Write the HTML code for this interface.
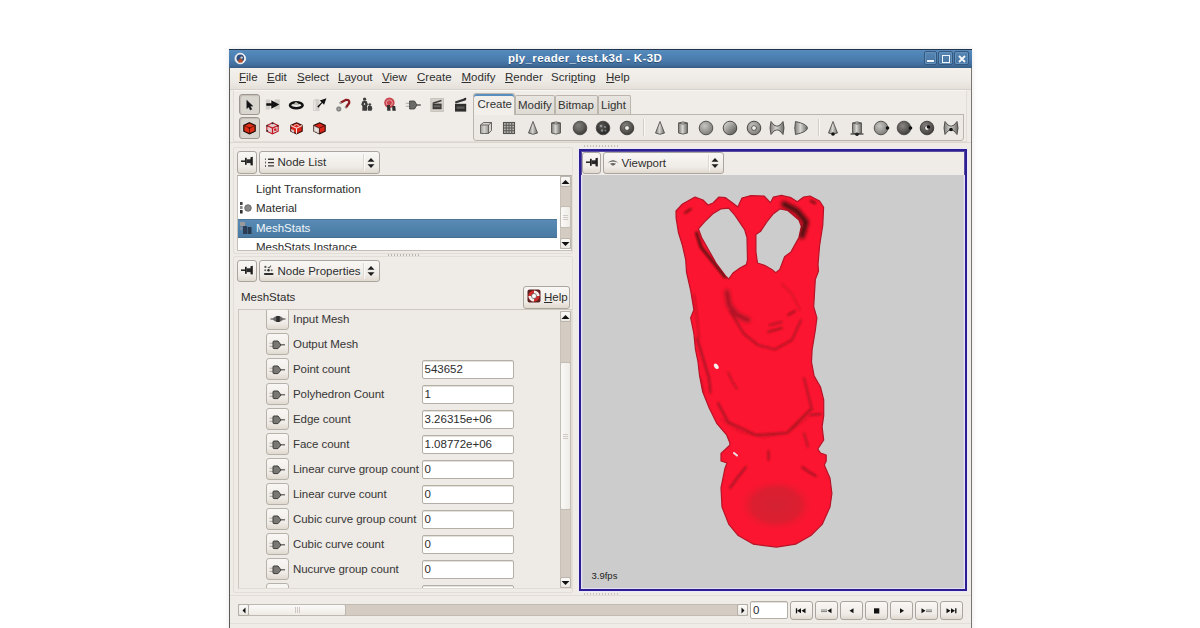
<!DOCTYPE html>
<html><head><meta charset="utf-8">
<style>
html,body{margin:0;padding:0;}
body{width:1200px;height:628px;overflow:hidden;background:#fff;position:relative;font-family:"Liberation Sans",sans-serif;font-size:11px;color:#2a2a2a;}
.a{position:absolute;}
.t{position:absolute;white-space:nowrap;line-height:13px;}
.btn{position:absolute;box-sizing:border-box;border:1px solid #aaa59e;border-radius:3px;background:linear-gradient(#f9f7f5,#efebe6 70%,#e0d9cf);}
.ent{position:absolute;box-sizing:border-box;border:1px solid #b3aea6;border-radius:2px;background:#fff;box-shadow:inset 0 1px 0 #e4e0da;}
svg{position:absolute;overflow:visible;}
</style></head>
<body>

<div class="a" style="left:229px;top:49px;width:743px;height:600px;background:#efebe7;border-left:1px solid #5e5b57;border-right:1px solid #7a7671;box-sizing:border-box;box-shadow:0 0 6px rgba(0,0,0,0.10)"></div>
<div class="a" style="left:229px;top:49px;width:743px;height:19px;background:linear-gradient(#5a8cbc 0,#5186b8 15%,#4a7cad 55%,#426f9e 80%,#365c84 100%);border-top:1px solid #1f3550;box-sizing:border-box"></div>
<div class="t" style="left:385px;top:52px;width:400px;text-align:center;color:#fff;font-weight:bold;font-size:11.5px;letter-spacing:0.35px;text-shadow:0 1px 0 #2d4f72">ply_reader_test.k3d - K-3D</div>
<svg style="left:234px;top:52px" width="13" height="13"><circle cx="6.3" cy="6.5" r="5.3" fill="#f2eeea" stroke="#fff" stroke-width="0.8"/><circle cx="6.3" cy="6.2" r="3.8" fill="#2e4f80"/><path d="M4.2,8.5 Q6.3,4.5 8.6,8.2 L8.4,10.6 L4.6,10.8Z" fill="#b24e2c"/><circle cx="7.6" cy="5.6" r="1.2" fill="#d9d0c8"/></svg>
<div class="a" style="left:923.5px;top:51px;width:13px;height:13.5px;box-sizing:border-box;border-radius:2px;background:linear-gradient(#5787b5,#4673a0);border:1px solid #35597e;box-shadow:inset 0 0 0 1px #6592bd"></div>
<div class="a" style="left:937.5px;top:51px;width:15px;height:13.5px;box-sizing:border-box;border-radius:2px;background:linear-gradient(#5787b5,#4673a0);border:1px solid #35597e;box-shadow:inset 0 0 0 1px #6592bd"></div>
<div class="a" style="left:953.5px;top:51px;width:15.5px;height:13.5px;box-sizing:border-box;border-radius:2px;background:linear-gradient(#5787b5,#4673a0);border:1px solid #35597e;box-shadow:inset 0 0 0 1px #6592bd"></div>
<div class="a" style="left:927px;top:60px;width:6.5px;height:2px;background:#f2f6fa"></div>
<div class="a" style="left:942px;top:55px;width:7.5px;height:7.5px;border:1.5px solid #eef4fa;box-sizing:border-box"></div>
<svg style="left:957.5px;top:55px" width="8" height="8"><path d="M1,1L7,7M7,1L1,7" stroke="#f2f6fa" stroke-width="1.9"/></svg>
<div class="a" style="left:230px;top:68px;width:741px;height:21px;background:linear-gradient(#f4f1ed,#eeeae5 60%,#e5e0d9)"></div>
<div class="a" style="left:233px;top:90px;width:734px;height:52px;box-sizing:border-box;border:1px solid #e2ddd6;border-top-color:#f8f6f3;background:#f0ede9"></div>
<div class="t" style="left:239px;top:71px;font-size:11.5px;color:#2e2e2e"><u style="text-decoration-thickness:1px;text-underline-offset:1px">F</u>ile</div>
<div class="t" style="left:267px;top:71px;font-size:11.5px;color:#2e2e2e"><u style="text-decoration-thickness:1px;text-underline-offset:1px">E</u>dit</div>
<div class="t" style="left:297px;top:71px;font-size:11.5px;color:#2e2e2e"><u style="text-decoration-thickness:1px;text-underline-offset:1px">S</u>elect</div>
<div class="t" style="left:338px;top:71px;font-size:11.5px;color:#2e2e2e"><u style="text-decoration-thickness:1px;text-underline-offset:1px">L</u>ayout</div>
<div class="t" style="left:382px;top:71px;font-size:11.5px;color:#2e2e2e"><u style="text-decoration-thickness:1px;text-underline-offset:1px">V</u>iew</div>
<div class="t" style="left:417px;top:71px;font-size:11.5px;color:#2e2e2e"><u style="text-decoration-thickness:1px;text-underline-offset:1px">C</u>reate</div>
<div class="t" style="left:461.5px;top:71px;font-size:11.5px;color:#2e2e2e"><u style="text-decoration-thickness:1px;text-underline-offset:1px">M</u>odify</div>
<div class="t" style="left:505px;top:71px;font-size:11.5px;color:#2e2e2e"><u style="text-decoration-thickness:1px;text-underline-offset:1px">R</u>ender</div>
<div class="t" style="left:551px;top:71px;font-size:11.5px;color:#2e2e2e">Scri<u style="text-decoration-thickness:1px;text-underline-offset:1px">p</u>ting</div>
<div class="t" style="left:606px;top:71px;font-size:11.5px;color:#2e2e2e"><u style="text-decoration-thickness:1px;text-underline-offset:1px">H</u>elp</div>
<div class="a" style="left:230px;top:89px;width:741px;height:1px;background:#d6d1ca"></div>
<svg width="0" height="0" style="left:0;top:0"><defs>
<radialGradient id="gs" cx="0.4" cy="0.35" r="0.7"><stop offset="0" stop-color="#c8c6c2"/><stop offset="1" stop-color="#7a7874"/></radialGradient>
<radialGradient id="gd" cx="0.4" cy="0.35" r="0.7"><stop offset="0" stop-color="#8a8784"/><stop offset="1" stop-color="#3a3836"/></radialGradient>
<radialGradient id="gk" cx="0.4" cy="0.35" r="0.7"><stop offset="0" stop-color="#5a5856"/><stop offset="1" stop-color="#222"/></radialGradient>
<linearGradient id="gc" x1="0" x2="1"><stop offset="0" stop-color="#7c7a77"/><stop offset="0.45" stop-color="#d8d6d2"/><stop offset="1" stop-color="#6a6865"/></linearGradient>
<linearGradient id="gh" x1="0" y1="0" x2="1" y2="1"><stop offset="0" stop-color="#e8e6e2"/><stop offset="0.5" stop-color="#9b9995"/><stop offset="1" stop-color="#4a4846"/></linearGradient>
</defs></svg>
<div class="a" style="left:239px;top:94px;width:21px;height:21px;box-sizing:border-box;border:1px solid #9c978f;border-radius:3px;background:#d9d5cf;box-shadow:inset 1px 1px 1px #c2beb7"></div>
<div class="a" style="left:239px;top:117px;width:21px;height:22px;box-sizing:border-box;border:1px solid #9c978f;border-radius:3px;background:#d9d5cf;box-shadow:inset 1px 1px 1px #c2beb7"></div>
<svg style="left:230px;top:90px" width="250" height="52" viewBox="230 90 250 52"><path d="M246.8,100.3 L246.8,108.6 L248.7,107 L250.3,110 L251.8,109.3 L250.3,106.3 L252.8,106.1 Z" fill="#111" stroke="#222" stroke-width="0.5"/></svg>
<svg style="left:230px;top:90px" width="250" height="52" viewBox="230 90 250 52"><rect x="265.8" y="99.5" width="4.4" height="10" fill="#d2cfca"/><rect x="274.5" y="99.5" width="5.3" height="10" fill="#cdc9c3"/><path d="M266.3,103.2 L271.3,103.2 L271.3,100.3 L279.3,104.5 L271.3,108.7 L271.3,105.8 L266.3,105.8Z" fill="#111"/></svg>
<svg style="left:230px;top:90px" width="250" height="52" viewBox="230 90 250 52"><ellipse cx="296.3" cy="105.3" rx="6.3" ry="3" fill="#e8e6e2" stroke="#111" stroke-width="2.6"/><path d="M293,105 L296,101.8 L299.5,105Z" fill="#b8b5b0"/></svg>
<svg style="left:230px;top:90px" width="250" height="52" viewBox="230 90 250 52"><path d="M313.2,100.5 L316,98.8 L319.5,99.5 L319.5,111 L313.2,111Z" fill="#d3d0cb"/><path d="M314,101 L315.5,101 L315.5,110 L314,110Z" fill="#e9e7e3"/><path d="M317.3,106.6 L321.6,102.3 L319.8,100.5 L326.4,98.2 L324.1,104.8 L322.3,103 L318.4,107.7Z" fill="#111"/></svg>
<svg style="left:230px;top:90px" width="250" height="52" viewBox="230 90 250 52"><circle cx="338.8" cy="109" r="2.3" fill="#8a8886" stroke="#777" stroke-width="0.6"/><circle cx="338.8" cy="109" r="0.8" fill="#bbb"/><path d="M341.4,102.3 L345.5,100 Q349.8,99.4 349.2,103 L346.3,107" fill="none" stroke="#8e1a22" stroke-width="2.3" stroke-linecap="round"/><path d="M339.5,103.4 L341.4,102.3 M344.8,107.6 L346.3,107" stroke="#9a9894" stroke-width="2"/></svg>
<svg style="left:230px;top:90px" width="250" height="52" viewBox="230 90 250 52"><circle cx="364.6" cy="99.2" r="1.6" fill="#3e3e3c"/><path d="M362.6,101 L366.6,101 L368,104.5 L367,106 L367.2,110.8 L362.3,110.8 L362.4,106 L361.2,104.5Z" fill="#3e3e3c"/><circle cx="369.8" cy="104.6" r="1.4" fill="#444"/><path d="M368,106 L371.6,106 L372.3,108.5 L371.6,110.8 L368.2,110.8 L367.6,108.5Z" fill="#3e3e3c"/><path d="M364,103 L365,103 L365.2,105 L363.8,105Z" fill="#cfccc8"/></svg>
<svg style="left:230px;top:90px" width="250" height="52" viewBox="230 90 250 52"><circle cx="389.4" cy="102.8" r="5.2" fill="#c9444c"/><circle cx="389.4" cy="102.8" r="3" fill="none" stroke="#e7a3a8" stroke-width="1"/><path d="M387,105 L390,105 L390.6,110.8 L387.2,110.8Z" fill="#333"/><path d="M392.2,106 L395.2,106 L395.8,110.8 L392.4,110.8Z" fill="#2e2e2e"/></svg>
<svg style="left:230px;top:90px" width="250" height="52" viewBox="230 90 250 52"><path d="M405.8,103.3 L409.8,103.3 M405.8,106.2 L409.8,106.2" stroke="#a9a6a0" stroke-width="1.1"/><path d="M409.6,101 L414.5,101 L417,105 L414.5,109 L409.6,109Z" fill="#6c6a68" stroke="#3e3c3a" stroke-width="0.8"/><path d="M416.5,105 L420.8,105" stroke="#4a4846" stroke-width="1.3"/></svg>
<svg style="left:230px;top:90px" width="250" height="52" viewBox="230 90 250 52"><rect x="430.8" y="98.4" width="12.8" height="13" fill="#d4d0ca" stroke="#c2beb7" stroke-width="0.8"/><path d="M432.6,103.6 L441.6,103.6 L441.6,109.2 L432.6,109.2Z" fill="#3a3937"/><path d="M432.6,102.6 L441.3,99.8 L441.6,101.3 L432.9,104Z" fill="#3e3d3b"/><rect x="433.8" y="105.4" width="6.6" height="1.8" fill="#6a6866"/></svg>
<svg style="left:230px;top:90px" width="250" height="52" viewBox="230 90 250 52"><path d="M455,103.8 L466.2,103.8 L466.2,111.6 L455,111.6Z" fill="#2f2e2d"/><path d="M455,101.6 L465.4,98 L466,100.2 L455.6,103.6Z" fill="#333"/><rect x="456.6" y="106.4" width="8" height="2.4" fill="#5e5c5a"/><circle cx="465.3" cy="98.8" r="1" fill="#222"/></svg>
<svg style="left:242.5px;top:121.7px" width="13" height="12.6" viewBox="0 0 16 16.5" preserveAspectRatio="none"><path d="M8,1 L15,4.5 L15,12 L8,15.5 L1,12 L1,4.5Z" fill="#df2d16" stroke="#1e0a06" stroke-width="1.5"/><path d="M1,4.5 L8,8 L15,4.5 M8,8 L8,15.5" stroke="#5a1208" stroke-width="1" fill="none"/><circle cx="8" cy="8" r="1.2" fill="#4a0d08"/></svg>
<svg style="left:266.1px;top:121.7px" width="13" height="12.6" viewBox="0 0 16 16.5" preserveAspectRatio="none"><path d="M8,1 L15,4.5 L15,12 L8,15.5 L1,12 L1,4.5Z" fill="#e2cdd0" stroke="#b8141e" stroke-width="1.3"/><path d="M1,4.5 L8,8 L15,4.5 M8,8 L8,15.5" stroke="#c8141e" stroke-width="1.6" fill="none"/><rect x="10" y="8.5" width="3" height="3" fill="#d41a22"/><circle cx="8" cy="1.5" r="1.3" fill="#333"/><circle cx="1.5" cy="4.8" r="1.2" fill="#333"/><circle cx="1.5" cy="11.8" r="1.2" fill="#333"/><circle cx="14.5" cy="4.8" r="1.1" fill="#5a1a16"/></svg>
<svg style="left:289.5px;top:121.7px" width="13" height="12.6" viewBox="0 0 16 16.5" preserveAspectRatio="none"><path d="M8,1 L15,4.5 L15,12 L8,15.5 L1,12 L1,4.5Z" fill="#dc2418" stroke="#3a0d08" stroke-width="1.4"/><path d="M1,4.5 L8,8 L15,4.5 M8,8 L8,15.5" stroke="#f2e4e4" stroke-width="1.3" fill="none"/><path d="M5,4.6 L8,3.3 L11,4.6" stroke="#f2e2e2" stroke-width="1.1" fill="none"/><path d="M1.5,9 L5,11 L5,14 L1.5,12Z" fill="#d9d2d0"/></svg>
<svg style="left:313.2px;top:121.7px" width="13" height="12.6" viewBox="0 0 16 16.5" preserveAspectRatio="none"><path d="M8,1 L15,4.5 L15,12 L8,15.5 L1,12 L1,4.5Z" fill="#dc2418" stroke="#2a0d08" stroke-width="1.4"/><path d="M1,4.5 L8,8 L8,15.5 L1,12Z" fill="#cfc8c4"/><path d="M1,4.5 L8,8 L15,4.5 M8,8 L8,15.5" stroke="#3a0d08" stroke-width="1" fill="none"/><path d="M2.5,7 L6.5,9.5 L6.5,13 L2.5,11Z" fill="#e8e4e2"/></svg>
<div class="a" style="left:473px;top:114px;width:491px;height:27px;box-sizing:border-box;border:1px solid #bab5ad;border-radius:0 0 3px 3px;background:#ede9e4"></div>
<div class="a" style="left:472.5px;top:93px;width:42.5px;height:22px;box-sizing:border-box;border:1px solid #bab5ad;border-bottom:none;border-radius:3px 3px 0 0;background:#f2efeb;box-shadow:inset 0 2px 0 #5a8ebf"></div>
<div class="t" style="left:477.5px;top:98px;font-size:11.5px;color:#333">Create</div>
<div class="a" style="left:515px;top:95px;width:39.5px;height:19px;box-sizing:border-box;border:1px solid #bab5ad;border-bottom:none;border-radius:2px 2px 0 0;background:linear-gradient(#e9e5e0,#dedad4)"></div>
<div class="t" style="left:518px;top:99px;font-size:11.5px;color:#333">Modify</div>
<div class="a" style="left:555px;top:95px;width:42.5px;height:19px;box-sizing:border-box;border:1px solid #bab5ad;border-bottom:none;border-radius:2px 2px 0 0;background:linear-gradient(#e9e5e0,#dedad4)"></div>
<div class="t" style="left:558px;top:99px;font-size:11.5px;color:#333">Bitmap</div>
<div class="a" style="left:598px;top:95px;width:33px;height:19px;box-sizing:border-box;border:1px solid #bab5ad;border-bottom:none;border-radius:2px 2px 0 0;background:linear-gradient(#e9e5e0,#dedad4)"></div>
<div class="t" style="left:601px;top:99px;font-size:11.5px;color:#333">Light</div>
<div class="a" style="left:515px;top:114px;width:449px;height:1px;background:#bab5ad"></div>
<div class="a" style="left:643px;top:119px;width:1px;height:17px;background:#d2cdc6;box-shadow:1px 0 0 #faf8f6"></div>
<div class="a" style="left:817.5px;top:119px;width:1px;height:17px;background:#d2cdc6;box-shadow:1px 0 0 #faf8f6"></div>
<svg style="left:477.5px;top:119.5px" width="16" height="16" viewBox="0 0 16 16"><path d="M2.5,5 L5.5,2.5 L13.5,2.5 L13.5,10.5 L10.5,13.5 L2.5,13.5Z" fill="#d8d5d0" stroke="#5a5855" stroke-width="0.9"/><rect x="3" y="5.5" width="7.2" height="7.6" fill="url(#gc)" opacity="0.55"/><path d="M2.5,5 L10.5,5 L13.5,2.5 M10.5,5 L10.5,13.5" fill="none" stroke="#5a5855" stroke-width="0.9"/></svg>
<svg style="left:501.0px;top:119.5px" width="16" height="16" viewBox="0 0 16 16"><rect x="2.5" y="2.5" width="11" height="11" fill="#b8b5b0" stroke="#55534f" stroke-width="1.1"/><path d="M5.25,2.5V13.5M8,2.5V13.5M10.75,2.5V13.5M2.5,5.25H13.5M2.5,8H13.5M2.5,10.75H13.5" stroke="#5a5854" stroke-width="1"/></svg>
<svg style="left:524.5px;top:119.5px" width="16" height="16" viewBox="0 0 16 16"><path d="M8,1.5 L12.5,13 Q8,15.5 3.5,13Z" fill="url(#gc)" stroke="#555350" stroke-width="0.9"/></svg>
<svg style="left:548.0px;top:119.5px" width="16" height="16" viewBox="0 0 16 16"><path d="M3.5,3 Q8,0.8 12.5,3 L12.5,13 Q8,15.2 3.5,13Z" fill="url(#gc)" stroke="#555350" stroke-width="0.9"/><path d="M3.5,3 Q8,5.2 12.5,3" fill="none" stroke="#555350" stroke-width="0.8"/></svg>
<svg style="left:572.0px;top:119.5px" width="16" height="16" viewBox="0 0 16 16"><circle cx="8" cy="8" r="6.8" fill="url(#gd)" stroke="#4a4846" stroke-width="0.9"/><circle cx="8" cy="8" r="3" fill="#6a6865" opacity="0.4"/></svg>
<svg style="left:595.0px;top:119.5px" width="16" height="16" viewBox="0 0 16 16"><circle cx="8" cy="8" r="6.8" fill="url(#gk)" stroke="#4a4846" stroke-width="0.9"/><circle cx="6" cy="6" r="1.3" fill="#999"/><circle cx="10" cy="7" r="1.1" fill="#888"/><circle cx="7" cy="10.5" r="1.2" fill="#888"/><circle cx="10.5" cy="10.5" r="0.9" fill="#777"/></svg>
<svg style="left:618.5px;top:119.5px" width="16" height="16" viewBox="0 0 16 16"><circle cx="8" cy="8" r="6.8" fill="url(#gd)" stroke="#3e3c3a" stroke-width="0.9"/><circle cx="8" cy="8" r="2.4" fill="#f4f2ef" stroke="#3e3c3a" stroke-width="0.8"/></svg>
<svg style="left:651.5px;top:119.5px" width="16" height="16" viewBox="0 0 16 16"><path d="M8,1.5 L12.5,13 Q8,15.5 3.5,13Z" fill="url(#gc)" stroke="#555350" stroke-width="0.9"/></svg>
<svg style="left:674.5px;top:119.5px" width="16" height="16" viewBox="0 0 16 16"><path d="M3.5,3 Q8,0.8 12.5,3 L12.5,13 Q8,15.2 3.5,13Z" fill="url(#gc)" stroke="#555350" stroke-width="0.9"/><path d="M3.5,3 Q8,5.2 12.5,3" fill="none" stroke="#555350" stroke-width="0.8"/></svg>
<svg style="left:698.0px;top:119.5px" width="16" height="16" viewBox="0 0 16 16"><circle cx="8" cy="8" r="6.8" fill="url(#gs)" stroke="#4a4846" stroke-width="0.9"/></svg>
<svg style="left:722.0px;top:119.5px" width="16" height="16" viewBox="0 0 16 16"><circle cx="8" cy="8" r="6.8" fill="url(#gh)" stroke="#3e3c3a" stroke-width="0.9"/></svg>
<svg style="left:745.5px;top:119.5px" width="16" height="16" viewBox="0 0 16 16"><circle cx="8" cy="8" r="6.8" fill="url(#gs)" stroke="#3e3c3a" stroke-width="0.9"/><circle cx="8" cy="8" r="2.4" fill="#f4f2ef" stroke="#3e3c3a" stroke-width="0.8"/></svg>
<svg style="left:769.0px;top:119.5px" width="16" height="16" viewBox="0 0 16 16"><path d="M2,1.5 Q8,11 14,1.5 Q16,8 14,14.5 Q8,5 2,14.5 Q0,8 2,1.5Z" fill="url(#gc)" stroke="#4a4846" stroke-width="0.9"/></svg>
<svg style="left:792.5px;top:119.5px" width="16" height="16" viewBox="0 0 16 16"><path d="M2.5,1.5 Q14,4 14.5,8 Q14,12 2.5,14.5 Q1,8 2.5,1.5Z" fill="url(#gc)" stroke="#4a4846" stroke-width="0.9"/></svg>
<svg style="left:825.0px;top:119.5px" width="16" height="16" viewBox="0 0 16 16"><path d="M8,1.5 L12.5,13 Q8,15.5 3.5,13Z" fill="url(#gc)" stroke="#555350" stroke-width="0.9"/><circle cx="8" cy="14" r="1.8" fill="#111"/></svg>
<svg style="left:849.0px;top:119.5px" width="16" height="16" viewBox="0 0 16 16"><path d="M3.5,3 Q8,0.8 12.5,3 L12.5,13 Q8,15.2 3.5,13Z" fill="url(#gc)" stroke="#555350" stroke-width="0.9"/><path d="M3.5,3 Q8,5.2 12.5,3" fill="none" stroke="#555350" stroke-width="0.8"/><circle cx="8" cy="14.2" r="1.8" fill="#111"/><path d="M1.5,14 L14.5,14" stroke="#333" stroke-width="1.2"/></svg>
<svg style="left:872.5px;top:119.5px" width="16" height="16" viewBox="0 0 16 16"><circle cx="8" cy="8" r="6.8" fill="url(#gs)" stroke="#4a4846" stroke-width="0.9"/><circle cx="14.5" cy="8" r="1.8" fill="#111"/></svg>
<svg style="left:895.5px;top:119.5px" width="16" height="16" viewBox="0 0 16 16"><circle cx="8" cy="8" r="6.8" fill="url(#gd)" stroke="#4a4846" stroke-width="0.9"/><circle cx="14.5" cy="8" r="1.8" fill="#111"/></svg>
<svg style="left:919.0px;top:119.5px" width="16" height="16" viewBox="0 0 16 16"><circle cx="8" cy="8" r="6.8" fill="url(#gd)" stroke="#3e3c3a" stroke-width="0.9"/><circle cx="8" cy="8" r="2.4" fill="#f4f2ef" stroke="#3e3c3a" stroke-width="0.8"/><circle cx="9.5" cy="7" r="1.8" fill="#111"/></svg>
<svg style="left:943.0px;top:119.5px" width="16" height="16" viewBox="0 0 16 16"><path d="M2,1.5 Q8,11 14,1.5 Q16,8 14,14.5 Q8,5 2,14.5 Q0,8 2,1.5Z" fill="url(#gc)" stroke="#4a4846" stroke-width="0.9"/><circle cx="8" cy="9.5" r="1.8" fill="#111"/></svg>
<div class="a" style="left:230px;top:142px;width:741px;height:1px;background:#dcd7d0"></div>
<div class="a" style="left:233px;top:147px;width:340px;height:107px;box-sizing:border-box;border:1px solid #e2ddd6;border-radius:2px"></div>
<div class="a" style="left:233px;top:256px;width:340px;height:337px;box-sizing:border-box;border:1px solid #e2ddd6;border-radius:2px"></div>
<div class="a" style="left:388px;top:254px;width:33px;height:2px;background:repeating-linear-gradient(90deg,#b9b4ad 0 1px,transparent 1px 3px)"></div>
<div class="btn" style="left:237px;top:151px;width:20px;height:23px"></div>
<svg style="left:240.0px;top:155.0px" width="14" height="12"><path d="M1,6.2 H5.5" stroke="#1e1e1e" stroke-width="1.5"/><rect x="5" y="2.8" width="1.7" height="7" fill="#1e1e1e"/><rect x="6.5" y="4.3" width="4.5" height="3.8" fill="#2a2a2a"/><path d="M10.5,2.2 L12.8,1.8 L12.8,10.6 L10.5,10.2Z" fill="#1e1e1e"/></svg>
<div class="btn" style="left:259px;top:151px;width:121px;height:23px"></div>
<svg style="left:265px;top:158px" width="12" height="11"><path d="M0.5,0.5v1.5M0.5,3.5v2M0.5,7v2" stroke="#666" stroke-width="1"/><path d="M3,1.3H9M3,4.6H9M3,7.9H9" stroke="#3a3a3a" stroke-width="1.4"/></svg>
<div class="t" style="left:277.5px;top:155.5px;font-size:11.5px;color:#2e2e2e">Node List</div>
<div class="a" style="left:363px;top:154px;width:1px;height:17px;background:#dcd8d2;box-shadow:1px 0 0 #fbfaf8"></div>
<svg style="left:367px;top:156.5px" width="8" height="12"><path d="M4,1 L7.5,4.8 L0.5,4.8Z M4,11 L7.5,7.2 L0.5,7.2Z" fill="#1e1e1e"/></svg>
<div class="a" style="left:237px;top:175px;width:335px;height:76px;box-sizing:border-box;border:1px solid #c3beb6;border-top-color:#b0aba3;background:#fff;overflow:hidden"></div>
<div class="a" style="left:238px;top:218.5px;width:319px;height:19px;box-sizing:border-box;border-top:1px solid #4b7794;border-bottom:1px solid #466f8e;background:linear-gradient(#5b8ab6,#4e82aa 55%,#4a7aa3)"></div>
<div class="t" style="left:256px;top:183px;font-size:11.5px;color:#2c2c2c">Light Transformation</div>
<div class="t" style="left:256px;top:202px;font-size:11.5px;color:#2c2c2c">Material</div>
<div class="t" style="left:256px;top:221.5px;font-size:11.5px;color:#f2f6fa">MeshStats</div>
<div class="a" style="left:238px;top:236px;width:319px;height:14px;overflow:hidden"><div class="t" style="left:18px;top:5px;font-size:11.5px;color:#2c2c2c">MeshStats Instance</div></div>
<svg style="left:239px;top:201px" width="14" height="14"><rect x="1" y="1" width="2.6" height="3" fill="#444"/><rect x="1" y="5" width="2.6" height="3" fill="#888"/><rect x="1" y="9" width="2.6" height="3.5" fill="#333"/><circle cx="9" cy="7" r="3.3" fill="#8a8886" stroke="#555" stroke-width="0.7"/></svg>
<svg style="left:239px;top:221px" width="14" height="14"><rect x="1" y="1" width="5" height="4" fill="#9a9a9a"/><rect x="4" y="5" width="4" height="8" fill="#2c3e55"/><rect x="8.5" y="6" width="4" height="7" fill="#2a3a50"/><rect x="1" y="6" width="2.5" height="3" fill="#7a8ba0"/></svg>
<div class="a" style="left:559.5px;top:176px;width:11px;height:73px;box-sizing:border-box;background:#d4ccc3;border:1px solid #c8c1b8"></div>
<div class="a" style="left:559.5px;top:205.5px;width:11px;height:22.5px;box-sizing:border-box;background:linear-gradient(90deg,#faf9f7,#efece8);border:1px solid #c2bdb5;border-radius:2px"></div>
<div class="a" style="left:562.5px;top:214.75px;width:5px;height:5px;background:repeating-linear-gradient(#cfcac3 0 1px,transparent 1px 2px)"></div>
<div class="a" style="left:559.5px;top:176px;width:11px;height:11px;box-sizing:border-box;background:linear-gradient(#fbfaf8,#ebe8e3);border:1px solid #b9b4ac;border-radius:2px"></div>
<svg style="left:559.5px;top:179px" width="11" height="6"><path d="M1.5,5 L5.5,1 L9.5,5Z" fill="#111"/></svg>
<div class="a" style="left:559.5px;top:238px;width:11px;height:11px;box-sizing:border-box;background:linear-gradient(#fbfaf8,#ebe8e3);border:1px solid #b9b4ac;border-radius:2px"></div>
<svg style="left:559.5px;top:241px" width="11" height="6"><path d="M1.5,1 L5.5,5 L9.5,1Z" fill="#111"/></svg>
<div class="btn" style="left:237px;top:260px;width:20px;height:22px"></div>
<svg style="left:240.0px;top:263.5px" width="14" height="12"><path d="M1,6.2 H5.5" stroke="#1e1e1e" stroke-width="1.5"/><rect x="5" y="2.8" width="1.7" height="7" fill="#1e1e1e"/><rect x="6.5" y="4.3" width="4.5" height="3.8" fill="#2a2a2a"/><path d="M10.5,2.2 L12.8,1.8 L12.8,10.6 L10.5,10.2Z" fill="#1e1e1e"/></svg>
<div class="btn" style="left:259px;top:260px;width:121px;height:22px"></div>
<svg style="left:263px;top:264px" width="12" height="12"><circle cx="2.4" cy="2.9" r="1.1" fill="#555"/><path d="M4.8,3.2 L6.2,3.9 L8,1.6" stroke="#666" stroke-width="1.1" fill="none"/><circle cx="2.2" cy="6.3" r="1" fill="#666"/><circle cx="5.5" cy="6.3" r="1.2" fill="#222"/><circle cx="8.7" cy="6.3" r="1" fill="#777"/><path d="M2,10 H9.5" stroke="#2e2e2e" stroke-width="2.2" stroke-linecap="round"/></svg>
<div class="t" style="left:277.5px;top:264.5px;font-size:11.5px;color:#2e2e2e">Node Properties</div>
<div class="a" style="left:363px;top:263px;width:1px;height:16px;background:#dcd8d2;box-shadow:1px 0 0 #fbfaf8"></div>
<svg style="left:367px;top:265.0px" width="8" height="12"><path d="M4,1 L7.5,4.8 L0.5,4.8Z M4,11 L7.5,7.2 L0.5,7.2Z" fill="#1e1e1e"/></svg>
<div class="t" style="left:241px;top:290.5px;font-size:11.5px;color:#2c2c2c">MeshStats</div>
<div class="btn" style="left:523px;top:286px;width:47px;height:23px"></div>
<svg style="left:527px;top:289px" width="14" height="14"><rect x="0.5" y="0.5" width="13" height="13" rx="2" fill="#5a2020"/><circle cx="7" cy="7" r="5.6" fill="#d02a2a"/><path d="M7,1.4 A5.6,5.6 0 0 1 12.6,7 L9.5,7 A2.5,2.5 0 0 0 7,4.5Z M7,12.6 A5.6,5.6 0 0 1 1.4,7 L4.5,7 A2.5,2.5 0 0 0 7,9.5Z" fill="#f2eeee"/><circle cx="7" cy="7" r="2.5" fill="#fff" stroke="#444" stroke-width="0.6"/></svg>
<div class="t" style="left:544px;top:290.5px;font-size:11.5px;color:#2c2c2c"><u style="text-decoration-thickness:1px;text-underline-offset:1px">H</u>elp</div>
<div class="a" style="left:238px;top:309px;width:334px;height:280px;box-sizing:border-box;border:1px solid #cdc7be;border-right-color:#e0dbd4;border-bottom-color:#e0dbd4;background:#eeeae5;overflow:hidden" id="sw">
<div class="btn" style="left:27px;top:-2.5px;width:23px;height:22px;border-color:#b6b1a9"></div>
<svg style="left:31px;top:4.2px" width="16" height="10"><path d="M0.5,5 H15.5" stroke="#555" stroke-width="1.2"/><path d="M2.5,5 Q4.5,2 8,2 Q11.5,2 13.5,5 Q11.5,8 8,8 Q4.5,8 2.5,5Z" fill="#6a6866"/><rect x="6.3" y="2" width="3.4" height="6" fill="#2e2e2e"/></svg>
<div class="t" style="left:54px;top:2.5px;font-size:11.5px;color:#363636;letter-spacing:-0.06px">Input Mesh</div>
<div class="btn" style="left:27px;top:22.5px;width:23px;height:22px;border-color:#b6b1a9"></div>
<svg style="left:31px;top:27.5px" width="16" height="12"><path d="M-0.5,5.3H3M-0.5,8.4H3" stroke="#b5b1aa" stroke-width="1.1"/><path d="M4,3 Q3,3 3,4 L3,9.5 Q3,10.6 4,10.6 L8,10.6 L11,7 L8,3Z" fill="#7a7875" stroke="#3e3c3a" stroke-width="1"/><path d="M10.5,6.8H15" stroke="#4a4846" stroke-width="1.1"/></svg>
<div class="t" style="left:54px;top:27.5px;font-size:11.5px;color:#363636;letter-spacing:-0.06px">Output Mesh</div>
<div class="btn" style="left:27px;top:47.5px;width:23px;height:22px;border-color:#b6b1a9"></div>
<svg style="left:31px;top:52.5px" width="16" height="12"><path d="M-0.5,5.3H3M-0.5,8.4H3" stroke="#b5b1aa" stroke-width="1.1"/><path d="M4,3 Q3,3 3,4 L3,9.5 Q3,10.6 4,10.6 L8,10.6 L11,7 L8,3Z" fill="#7a7875" stroke="#3e3c3a" stroke-width="1"/><path d="M10.5,6.8H15" stroke="#4a4846" stroke-width="1.1"/></svg>
<div class="t" style="left:54px;top:52.5px;font-size:11.5px;color:#363636;letter-spacing:-0.06px">Point count</div>
<div class="ent" style="left:183px;top:49.5px;width:92px;height:19px"></div>
<div class="t" style="left:185.5px;top:53.0px;font-size:11.5px;color:#2c2c2c">543652</div>
<div class="btn" style="left:27px;top:72.5px;width:23px;height:22px;border-color:#b6b1a9"></div>
<svg style="left:31px;top:77.5px" width="16" height="12"><path d="M-0.5,5.3H3M-0.5,8.4H3" stroke="#b5b1aa" stroke-width="1.1"/><path d="M4,3 Q3,3 3,4 L3,9.5 Q3,10.6 4,10.6 L8,10.6 L11,7 L8,3Z" fill="#7a7875" stroke="#3e3c3a" stroke-width="1"/><path d="M10.5,6.8H15" stroke="#4a4846" stroke-width="1.1"/></svg>
<div class="t" style="left:54px;top:77.5px;font-size:11.5px;color:#363636;letter-spacing:-0.06px">Polyhedron Count</div>
<div class="ent" style="left:183px;top:74.5px;width:92px;height:19px"></div>
<div class="t" style="left:185.5px;top:78.0px;font-size:11.5px;color:#2c2c2c">1</div>
<div class="btn" style="left:27px;top:97.5px;width:23px;height:22px;border-color:#b6b1a9"></div>
<svg style="left:31px;top:102.5px" width="16" height="12"><path d="M-0.5,5.3H3M-0.5,8.4H3" stroke="#b5b1aa" stroke-width="1.1"/><path d="M4,3 Q3,3 3,4 L3,9.5 Q3,10.6 4,10.6 L8,10.6 L11,7 L8,3Z" fill="#7a7875" stroke="#3e3c3a" stroke-width="1"/><path d="M10.5,6.8H15" stroke="#4a4846" stroke-width="1.1"/></svg>
<div class="t" style="left:54px;top:102.5px;font-size:11.5px;color:#363636;letter-spacing:-0.06px">Edge count</div>
<div class="ent" style="left:183px;top:99.5px;width:92px;height:19px"></div>
<div class="t" style="left:185.5px;top:103.0px;font-size:11.5px;color:#2c2c2c">3.26315e+06</div>
<div class="btn" style="left:27px;top:122.5px;width:23px;height:22px;border-color:#b6b1a9"></div>
<svg style="left:31px;top:127.5px" width="16" height="12"><path d="M-0.5,5.3H3M-0.5,8.4H3" stroke="#b5b1aa" stroke-width="1.1"/><path d="M4,3 Q3,3 3,4 L3,9.5 Q3,10.6 4,10.6 L8,10.6 L11,7 L8,3Z" fill="#7a7875" stroke="#3e3c3a" stroke-width="1"/><path d="M10.5,6.8H15" stroke="#4a4846" stroke-width="1.1"/></svg>
<div class="t" style="left:54px;top:127.5px;font-size:11.5px;color:#363636;letter-spacing:-0.06px">Face count</div>
<div class="ent" style="left:183px;top:124.5px;width:92px;height:19px"></div>
<div class="t" style="left:185.5px;top:128.0px;font-size:11.5px;color:#2c2c2c">1.08772e+06</div>
<div class="btn" style="left:27px;top:147.5px;width:23px;height:22px;border-color:#b6b1a9"></div>
<svg style="left:31px;top:152.5px" width="16" height="12"><path d="M-0.5,5.3H3M-0.5,8.4H3" stroke="#b5b1aa" stroke-width="1.1"/><path d="M4,3 Q3,3 3,4 L3,9.5 Q3,10.6 4,10.6 L8,10.6 L11,7 L8,3Z" fill="#7a7875" stroke="#3e3c3a" stroke-width="1"/><path d="M10.5,6.8H15" stroke="#4a4846" stroke-width="1.1"/></svg>
<div class="t" style="left:54px;top:152.5px;font-size:11.5px;color:#363636;letter-spacing:-0.06px">Linear curve group count</div>
<div class="ent" style="left:183px;top:149.5px;width:92px;height:19px"></div>
<div class="t" style="left:185.5px;top:153.0px;font-size:11.5px;color:#2c2c2c">0</div>
<div class="btn" style="left:27px;top:172.5px;width:23px;height:22px;border-color:#b6b1a9"></div>
<svg style="left:31px;top:177.5px" width="16" height="12"><path d="M-0.5,5.3H3M-0.5,8.4H3" stroke="#b5b1aa" stroke-width="1.1"/><path d="M4,3 Q3,3 3,4 L3,9.5 Q3,10.6 4,10.6 L8,10.6 L11,7 L8,3Z" fill="#7a7875" stroke="#3e3c3a" stroke-width="1"/><path d="M10.5,6.8H15" stroke="#4a4846" stroke-width="1.1"/></svg>
<div class="t" style="left:54px;top:177.5px;font-size:11.5px;color:#363636;letter-spacing:-0.06px">Linear curve count</div>
<div class="ent" style="left:183px;top:174.5px;width:92px;height:19px"></div>
<div class="t" style="left:185.5px;top:178.0px;font-size:11.5px;color:#2c2c2c">0</div>
<div class="btn" style="left:27px;top:197.5px;width:23px;height:22px;border-color:#b6b1a9"></div>
<svg style="left:31px;top:202.5px" width="16" height="12"><path d="M-0.5,5.3H3M-0.5,8.4H3" stroke="#b5b1aa" stroke-width="1.1"/><path d="M4,3 Q3,3 3,4 L3,9.5 Q3,10.6 4,10.6 L8,10.6 L11,7 L8,3Z" fill="#7a7875" stroke="#3e3c3a" stroke-width="1"/><path d="M10.5,6.8H15" stroke="#4a4846" stroke-width="1.1"/></svg>
<div class="t" style="left:54px;top:202.5px;font-size:11.5px;color:#363636;letter-spacing:-0.06px">Cubic curve group count</div>
<div class="ent" style="left:183px;top:199.5px;width:92px;height:19px"></div>
<div class="t" style="left:185.5px;top:203.0px;font-size:11.5px;color:#2c2c2c">0</div>
<div class="btn" style="left:27px;top:222.5px;width:23px;height:22px;border-color:#b6b1a9"></div>
<svg style="left:31px;top:227.5px" width="16" height="12"><path d="M-0.5,5.3H3M-0.5,8.4H3" stroke="#b5b1aa" stroke-width="1.1"/><path d="M4,3 Q3,3 3,4 L3,9.5 Q3,10.6 4,10.6 L8,10.6 L11,7 L8,3Z" fill="#7a7875" stroke="#3e3c3a" stroke-width="1"/><path d="M10.5,6.8H15" stroke="#4a4846" stroke-width="1.1"/></svg>
<div class="t" style="left:54px;top:227.5px;font-size:11.5px;color:#363636;letter-spacing:-0.06px">Cubic curve count</div>
<div class="ent" style="left:183px;top:224.5px;width:92px;height:19px"></div>
<div class="t" style="left:185.5px;top:228.0px;font-size:11.5px;color:#2c2c2c">0</div>
<div class="btn" style="left:27px;top:247.5px;width:23px;height:22px;border-color:#b6b1a9"></div>
<svg style="left:31px;top:252.5px" width="16" height="12"><path d="M-0.5,5.3H3M-0.5,8.4H3" stroke="#b5b1aa" stroke-width="1.1"/><path d="M4,3 Q3,3 3,4 L3,9.5 Q3,10.6 4,10.6 L8,10.6 L11,7 L8,3Z" fill="#7a7875" stroke="#3e3c3a" stroke-width="1"/><path d="M10.5,6.8H15" stroke="#4a4846" stroke-width="1.1"/></svg>
<div class="t" style="left:54px;top:252.5px;font-size:11.5px;color:#363636;letter-spacing:-0.06px">Nucurve group count</div>
<div class="ent" style="left:183px;top:249.5px;width:92px;height:19px"></div>
<div class="t" style="left:185.5px;top:253.0px;font-size:11.5px;color:#2c2c2c">0</div>
<div class="btn" style="left:27px;top:272.5px;width:23px;height:22px;border-color:#b6b1a9"></div>
<div class="ent" style="left:183px;top:274.5px;width:92px;height:19px"></div>
</div>
<div class="a" style="left:559.5px;top:310.5px;width:11px;height:277.5px;box-sizing:border-box;background:#d4ccc3;border:1px solid #c8c1b8"></div>
<div class="a" style="left:559.5px;top:362px;width:11px;height:148px;box-sizing:border-box;background:linear-gradient(90deg,#faf9f7,#efece8);border:1px solid #c2bdb5;border-radius:2px"></div>
<div class="a" style="left:562.5px;top:434.0px;width:5px;height:5px;background:repeating-linear-gradient(#cfcac3 0 1px,transparent 1px 2px)"></div>
<div class="a" style="left:559.5px;top:310.5px;width:11px;height:11px;box-sizing:border-box;background:linear-gradient(#fbfaf8,#ebe8e3);border:1px solid #b9b4ac;border-radius:2px"></div>
<svg style="left:559.5px;top:313.5px" width="11" height="6"><path d="M1.5,5 L5.5,1 L9.5,5Z" fill="#111"/></svg>
<div class="a" style="left:559.5px;top:577.0px;width:11px;height:11px;box-sizing:border-box;background:linear-gradient(#fbfaf8,#ebe8e3);border:1px solid #b9b4ac;border-radius:2px"></div>
<svg style="left:559.5px;top:580.0px" width="11" height="6"><path d="M1.5,1 L5.5,5 L9.5,1Z" fill="#111"/></svg>
<div class="a" style="left:584px;top:145px;width:34px;height:2px;background:repeating-linear-gradient(90deg,#c4bfb8 0 1px,transparent 1px 3px)"></div>
<div class="a" style="left:579px;top:149px;width:388px;height:442px;box-sizing:border-box;border:2px solid #2b1e92;background:#efebe7;box-shadow:0 0 0 1px #ece8fa, inset 0 0 0 1px #5a4ca0"></div>
<div class="a" style="left:581px;top:175px;width:384px;height:414px;box-sizing:border-box;background:#cccccc;border:1px solid #e4e0f4;border-top:none;box-shadow:inset 1px 0 0 #d4d2da, inset -1px 0 0 #d4d2da"></div>
<div class="btn" style="left:582px;top:152px;width:19px;height:22px"></div>
<svg style="left:584.5px;top:155.5px" width="14" height="12"><path d="M1,6.2 H5.5" stroke="#1e1e1e" stroke-width="1.5"/><rect x="5" y="2.8" width="1.7" height="7" fill="#1e1e1e"/><rect x="6.5" y="4.3" width="4.5" height="3.8" fill="#2a2a2a"/><path d="M10.5,2.2 L12.8,1.8 L12.8,10.6 L10.5,10.2Z" fill="#1e1e1e"/></svg>
<div class="btn" style="left:603px;top:152px;width:121px;height:22px"></div>
<svg style="left:607px;top:158px" width="12" height="10"><path d="M0.5,5 Q6,-0.5 11.5,5 Q6,2.2 0.5,5Z" fill="#444"/><path d="M3,5.6 Q6,9.8 9,5.6 Q6,4.2 3,5.6Z" fill="#666"/></svg>
<div class="t" style="left:621.5px;top:156.5px;font-size:11.5px;color:#2e2e2e">Viewport</div>
<div class="a" style="left:707.5px;top:155px;width:1px;height:16px;background:#dcd8d2;box-shadow:1px 0 0 #fbfaf8"></div>
<svg style="left:711px;top:157.0px" width="8" height="12"><path d="M4,1 L7.5,4.8 L0.5,4.8Z M4,11 L7.5,7.2 L0.5,7.2Z" fill="#1e1e1e"/></svg>
<div class="t" style="left:591.5px;top:568.5px;font-size:9.5px;color:#222">3.9fps</div>
<div class="a" style="left:230px;top:595px;width:741px;height:1px;background:#e2ded7"></div>
<div class="a" style="left:584px;top:593px;width:34px;height:2px;background:repeating-linear-gradient(90deg,#c8c3bc 0 1px,transparent 1px 3px)"></div>
<div class="a" style="left:238px;top:604px;width:510px;height:12px;box-sizing:border-box;background:#d4ccc3;border:1px solid #c2bbb2"></div>
<div class="a" style="left:248px;top:604px;width:98px;height:12px;box-sizing:border-box;background:linear-gradient(#fbfaf8,#efebe6);border:1px solid #bdb8b0;border-radius:2px"></div>
<div class="a" style="left:295px;top:607px;width:5px;height:6px;background:repeating-linear-gradient(90deg,#cdc8c1 0 1px,transparent 1px 2px)"></div>
<div class="a" style="left:238px;top:604px;width:11px;height:12px;box-sizing:border-box;background:linear-gradient(#fbfaf8,#ebe8e3);border:1px solid #b3aea6;border-radius:2px"></div>
<svg style="left:241px;top:605px" width="6" height="11"><path d="M4.5,2.5 L1.5,5.5 L4.5,8.5Z" fill="#111"/></svg>
<div class="a" style="left:737px;top:604px;width:11px;height:12px;box-sizing:border-box;background:linear-gradient(#fbfaf8,#ebe8e3);border:1px solid #b3aea6;border-radius:2px"></div>
<svg style="left:740px;top:605px" width="6" height="11"><path d="M1.5,2.5 L4.5,5.5 L1.5,8.5Z" fill="#111"/></svg>
<div class="ent" style="left:750px;top:601px;width:38px;height:18px"></div>
<div class="t" style="left:753px;top:603.5px;font-size:11.5px;color:#2c2c2c">0</div>
<div class="btn" style="left:789.5px;top:600.5px;width:23px;height:19px"></div>
<svg style="left:789.5px;top:600.5px" width="23" height="19"><path d="M6.5,7.3V12.3" stroke="#111" stroke-width="1.3"/><path d="M11,7.3 L7,9.8 L11,12.3Z M15.5,7.3 L11.5,9.8 L15.5,12.3Z" fill="#111"/></svg>
<div class="btn" style="left:814.5px;top:600.5px;width:23px;height:19px"></div>
<svg style="left:814.5px;top:600.5px" width="23" height="19"><path d="M6,9H12M6,10.6H12" stroke="#777" stroke-width="0.9"/><path d="M12.5,9.8 L16.5,7.3 L16.5,12.3Z" fill="#111"/></svg>
<div class="btn" style="left:839.5px;top:600.5px;width:23px;height:19px"></div>
<svg style="left:839.5px;top:600.5px" width="23" height="19"><path d="M13.5,7.3 L9.5,9.8 L13.5,12.3Z" fill="#111"/></svg>
<div class="btn" style="left:864.5px;top:600.5px;width:23px;height:19px"></div>
<svg style="left:864.5px;top:600.5px" width="23" height="19"><rect x="9" y="7.3" width="5.3" height="5.2" fill="#111"/></svg>
<div class="btn" style="left:889.5px;top:600.5px;width:23px;height:19px"></div>
<svg style="left:889.5px;top:600.5px" width="23" height="19"><path d="M10,7.3 L14,9.8 L10,12.3Z" fill="#111"/></svg>
<div class="btn" style="left:915px;top:600.5px;width:23px;height:19px"></div>
<svg style="left:915px;top:600.5px" width="23" height="19"><path d="M6.5,7.3 L10.5,9.8 L6.5,12.3Z" fill="#111"/><path d="M11,9H17M11,10.6H17" stroke="#777" stroke-width="0.9"/></svg>
<div class="btn" style="left:940px;top:600.5px;width:23px;height:19px"></div>
<svg style="left:940px;top:600.5px" width="23" height="19"><path d="M6.5,7.3 L10.5,9.8 L6.5,12.3Z M11,7.3 L15,9.8 L11,12.3Z" fill="#111"/><path d="M15.8,7.3V12.3" stroke="#111" stroke-width="1.3"/></svg>
<div class="a" style="left:230px;top:623px;width:741px;height:1px;background:#e2ded8"></div>
<svg style="left:581px;top:175px" width="384" height="414"><defs>
<radialGradient id="bb" cx="0.5" cy="0.5" r="0.5"><stop offset="0" stop-color="#d42232"/><stop offset="0.6" stop-color="#dc1e30"/><stop offset="1" stop-color="#fc1530" stop-opacity="0"/></radialGradient>
<clipPath id="bclip"><path d="M95.0,36.0 L101.5,29.0 L114.0,22.0 L122.0,25.0 L127.0,30.0 L132.0,28.0 L138.0,22.0 L144.5,22.7 L151.0,27.5 L156.8,32.0 L161.0,23.0 L170.0,20.6 L183.0,21.0 L189.4,27.7 L192.4,22.0 L200.4,20.4 L210.0,22.7 L216.3,26.7 L222.7,22.0 L229.0,21.0 L238.6,26.0 L242.6,32.3 L241.8,49.8 L238.6,70.5 L237.0,89.6 L237.5,96.0 L234.3,104.6 L232.7,131.6 L235.9,142.8 L234.3,155.5 L231.1,174.6 L230.5,187.0 L233.1,200.9 L239.5,212.0 L242.7,224.8 L242.7,240.7 L241.1,251.9 L242.7,265.0 L236.8,274.0 L239.5,278.0 L245.2,280.0 L245.2,286.0 L243.3,289.9 L249.0,303.2 L250.9,318.5 L249.0,331.9 L241.4,349.1 L229.9,360.6 L214.6,369.2 L195.5,372.1 L172.5,369.2 L157.2,360.6 L147.7,349.1 L141.0,331.9 L140.0,312.8 L143.9,293.7 L146.0,288.0 L140.0,286.0 L140.0,278.4 L149.0,270.0 L148.8,267.8 L145.6,259.8 L136.0,248.7 L128.1,232.8 L121.7,216.8 L118.6,200.9 L117.0,187.0 L114.5,174.6 L112.9,158.7 L109.7,142.8 L112.9,134.8 L109.7,115.7 L105.5,97.0 L104.7,84.8 L101.5,70.5 L97.5,57.8 L95.1,43.0ZM139.7,33.9 L147.7,33.1 L154.0,40.3 L163.6,54.6 L166.0,62.5 L166.5,84.8 L165.4,89.6 L159.0,93.0 L152.0,98.0 L147.7,104.0 L144.5,100.8 L135.0,88.0 L120.6,62.5 L117.4,53.8 L123.8,46.6 L131.8,38.7ZM198.8,33.9 L206.8,35.5 L217.9,45.0 L220.3,51.4 L217.9,62.5 L210.0,76.9 L203.6,81.7 L198.8,94.4 L194.8,97.6 L190.8,94.4 L184.0,90.5 L176.5,88.0 L174.9,76.9 L174.9,59.4 L179.7,56.2 L186.0,46.6 L192.4,38.7Z" fill-rule="evenodd" clip-rule="evenodd"/></clipPath>
<filter id="bl" x="-20%" y="-20%" width="140%" height="140%"><feGaussianBlur stdDeviation="0.8"/></filter>
<filter id="bl2" x="-20%" y="-20%" width="140%" height="140%"><feGaussianBlur stdDeviation="1.6"/></filter>
</defs>
<path d="M95.0,36.0 L101.5,29.0 L114.0,22.0 L122.0,25.0 L127.0,30.0 L132.0,28.0 L138.0,22.0 L144.5,22.7 L151.0,27.5 L156.8,32.0 L161.0,23.0 L170.0,20.6 L183.0,21.0 L189.4,27.7 L192.4,22.0 L200.4,20.4 L210.0,22.7 L216.3,26.7 L222.7,22.0 L229.0,21.0 L238.6,26.0 L242.6,32.3 L241.8,49.8 L238.6,70.5 L237.0,89.6 L237.5,96.0 L234.3,104.6 L232.7,131.6 L235.9,142.8 L234.3,155.5 L231.1,174.6 L230.5,187.0 L233.1,200.9 L239.5,212.0 L242.7,224.8 L242.7,240.7 L241.1,251.9 L242.7,265.0 L236.8,274.0 L239.5,278.0 L245.2,280.0 L245.2,286.0 L243.3,289.9 L249.0,303.2 L250.9,318.5 L249.0,331.9 L241.4,349.1 L229.9,360.6 L214.6,369.2 L195.5,372.1 L172.5,369.2 L157.2,360.6 L147.7,349.1 L141.0,331.9 L140.0,312.8 L143.9,293.7 L146.0,288.0 L140.0,286.0 L140.0,278.4 L149.0,270.0 L148.8,267.8 L145.6,259.8 L136.0,248.7 L128.1,232.8 L121.7,216.8 L118.6,200.9 L117.0,187.0 L114.5,174.6 L112.9,158.7 L109.7,142.8 L112.9,134.8 L109.7,115.7 L105.5,97.0 L104.7,84.8 L101.5,70.5 L97.5,57.8 L95.1,43.0ZM139.7,33.9 L147.7,33.1 L154.0,40.3 L163.6,54.6 L166.0,62.5 L166.5,84.8 L165.4,89.6 L159.0,93.0 L152.0,98.0 L147.7,104.0 L144.5,100.8 L135.0,88.0 L120.6,62.5 L117.4,53.8 L123.8,46.6 L131.8,38.7ZM198.8,33.9 L206.8,35.5 L217.9,45.0 L220.3,51.4 L217.9,62.5 L210.0,76.9 L203.6,81.7 L198.8,94.4 L194.8,97.6 L190.8,94.4 L184.0,90.5 L176.5,88.0 L174.9,76.9 L174.9,59.4 L179.7,56.2 L186.0,46.6 L192.4,38.7Z" fill="#fc1530" fill-rule="evenodd" stroke="#b81226" stroke-width="1.2" stroke-linejoin="round"/>
<ellipse cx="195" cy="330" rx="40" ry="28" fill="url(#bb)"/>
<g clip-path="url(#bclip)"><g fill="none" stroke="#7a1018" stroke-linecap="round" filter="url(#bl)">
<path d="M115.5,58.0 L120.0,72.0 L132.0,87.0 L144.0,102.0" stroke-width="2.8" stroke="#5a1010"/>
<path d="M203.0,29.0 L216.0,36.0 L225.0,47.0 L221.0,61.0" stroke-width="5.5" filter="url(#bl2)" stroke="#4a1010"/>
<path d="M230.0,26.0 L234.0,28.0" stroke-width="2.2" stroke="#6a1010"/>
<path d="M104.0,38.0 L110.0,34.0" stroke-width="1.8" stroke="#6a1010"/>
<path d="M146.0,117.0 L148.0,130.0 L156.0,140.0 L167.0,145.0" stroke-width="5" stroke="#8a1220" opacity="0.75" filter="url(#bl2)"/>
<path d="M149.0,136.0 L163.0,159.0 L177.0,170.0 L194.0,174.5 L211.0,165.0 L220.0,145.0" stroke-width="1.6" stroke="#9a1422"/>
<path d="M201.0,109.0 L211.0,119.0 L219.0,135.0" stroke-width="1.2" stroke="#c01424"/>
<path d="M207.0,140.0 L214.0,136.0" stroke-width="1.6" stroke="#8a1420"/>
<path d="M188.5,150.0 L201.0,147.0" stroke-width="1.4" stroke="#9a1422"/>
<path d="M187.0,157.0 L201.0,153.0" stroke-width="1.5" stroke="#8a1420"/>
<path d="M113.0,119.0 L116.0,143.0 L118.0,163.0" stroke-width="1.2" stroke="#b01424"/>
<path d="M137.0,228.0 L147.0,247.0 L175.0,260.0 L206.0,258.0 L229.0,235.0" stroke-width="1.8" stroke="#9a1522"/>
<path d="M140.0,244.0 L159.0,257.0 L183.0,262.5 L208.0,257.0 L227.0,242.5" stroke-width="1.2" stroke="#b81624" opacity="0.6"/>
<path d="M116.0,163.0 L122.0,183.0 L128.0,203.0 L129.6,218.0" stroke-width="1.6" stroke="#8a1420"/>
<path d="M147.0,197.0 L151.0,206.0 L156.0,214.0" stroke-width="1.4" stroke="#a01522"/>
<path d="M223.0,203.0 L227.0,219.0 L231.0,235.0" stroke-width="1.5" stroke="#9a1522"/>
<path d="M229.0,240.0 L240.0,239.0" stroke-width="1.5" stroke="#8a1420"/>
<path d="M223.0,258.0 L227.0,272.0" stroke-width="1.4" stroke="#9a1522"/>
<path d="M187.5,276.0 L187.5,285.0" stroke-width="1.6" stroke="#8a1420"/>
<path d="M165.0,292.0 L157.0,302.0 L149.0,313.0" stroke-width="1.6" stroke="#8a1420"/>
<path d="M221.0,292.0 L228.0,297.0 L235.0,301.0" stroke-width="1.6" stroke="#8a1420"/>
<path d="M119.0,203.0 L122.0,217.0" stroke-width="1.2" stroke="#a01420"/>
</g></g>
<ellipse cx="135.29999999999995" cy="191.3" rx="2" ry="3" transform="rotate(-35 135.29999999999995 191.3)" fill="#f4f0f0"/>
<path d="M153.0,278.0 L156.0,280.5" stroke="#e8e4e4" stroke-width="2" stroke-linecap="round"/>
</svg>
</body></html>
